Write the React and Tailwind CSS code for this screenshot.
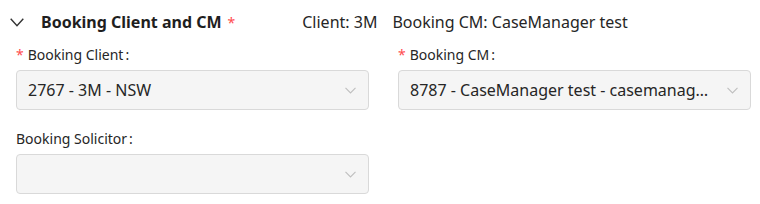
import React from "react";

function SelChevron() {
  return (
    <svg width="11" height="7" viewBox="0 0 11 7" fill="none" className="shrink-0">
      <path d="M0.5 0.8 L5.5 6 L10.5 0.8" stroke="#bfbfbf" strokeWidth="1.1" />
    </svg>
  );
}

function Select({ value }) {
  return (
    <div className="h-[40px] w-[353px] rounded-[4px] border border-[#d9d9d9] bg-[#f5f5f5] flex items-center pl-[11px] pr-[12px]">
      <span className="flex-1 min-w-0 truncate text-[16px] text-[#262626]">{value}</span>
      <span className="ml-[12px]"><SelChevron /></span>
    </div>
  );
}

function Label({ text, required }) {
  return (
    <div className="h-[22px] leading-[22px] text-[14px] text-[#262626] mb-[4px] flex items-center">
      {required && <span className="text-[#ff4d4f] mr-[4px] text-[14px]">*</span>}
      <span>{text}</span>
      <span className="ml-[2px]">:</span>
    </div>
  );
}

export default function App() {
  return (
    <div className="w-[760px] h-[204px] bg-white font-['Segoe_UI','Noto_Sans',sans-serif] text-[#262626]">
      <div className="h-[44px] flex items-center pl-[10px]">
        <svg width="14" height="9" viewBox="0 0 14 9" fill="none">
          <path d="M0.7 0.8 L7 7.8 L13.3 0.8" stroke="#333" strokeWidth="1.4" />
        </svg>
        <span className="ml-[17px] text-[16px] font-bold text-[#1f1f1f]">Booking Client and CM</span>
        <span className="ml-[6px] text-[#ff4d4f] text-[14px]">*</span>
        <span className="ml-[67px] text-[16px]">Client: 3M</span>
        <span className="ml-[15px] text-[16px]">Booking CM: CaseManager test</span>
      </div>
      <div className="pl-[16px] grid grid-cols-[353px_353px] gap-x-[29px] gap-y-[18px]">
        <div>
          <Label text="Booking Client" required />
          <Select value="2767 - 3M - NSW" />
        </div>
        <div>
          <Label text="Booking CM" required />
          <Select value="8787 - CaseManager test - casemanager8787@test.com" />
        </div>
        <div>
          <Label text="Booking Solicitor" />
          <Select value="" />
        </div>
      </div>
    </div>
  );
}
